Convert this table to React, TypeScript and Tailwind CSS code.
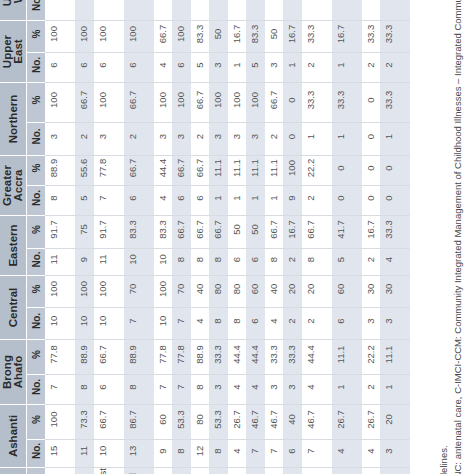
const colW = [
  "w-[80px]",
  "w-[28px]", "w-[35px]",
  "w-[30px]", "w-[35px]",
  "w-[32px]", "w-[32px]",
  "w-[27px]", "w-[33px]",
  "w-[30px]", "w-[30px]",
  "w-[33px]", "w-[40px]",
  "w-[30px]", "w-[32px]",
  "w-[30px]", "w-[32px]",
];

const regions = [
  { name: ["Ashanti"], w: "w-[63px]" },
  { name: ["Brong", "Ahafo"], w: "w-[65px]" },
  { name: ["Central"], w: "w-[64px]" },
  { name: ["Eastern"], w: "w-[60px]" },
  { name: ["Greater", "Accra"], w: "w-[60px]" },
  { name: ["Northern"], w: "w-[73px]" },
  { name: ["Upper", "East"], w: "w-[62px]" },
  { name: ["Upper", "West"], w: "w-[62px]" },
];

// label, two-line row?, values per region (No., %)
const rows: [string, boolean, string[]][] = [
  ["Trained in C-IMCI-CCM", true, ["15", "100", "7", "77.8", "10", "100", "11", "91.7", "8", "88.9", "3", "100", "6", "100"]],
  ["Has drug kit", false, ["11", "73.3", "8", "88.9", "10", "100", "9", "75", "5", "55.6", "2", "66.7", "6", "100"]],
  ["Supervised in last 3 months", true, ["10", "66.7", "6", "66.7", "10", "100", "11", "91.7", "7", "77.8", "3", "100", "6", "100"]],
  ["Has register and job aids", true, ["13", "86.7", "8", "88.9", "7", "70", "10", "83.3", "6", "66.7", "2", "66.7", "6", "100"]],
  ["RDTs in kit", false, ["9", "60", "7", "77.8", "10", "100", "10", "83.3", "4", "44.4", "3", "100", "4", "66.7"]],
  ["ACTs in kit", false, ["8", "53.3", "7", "77.8", "7", "70", "8", "66.7", "6", "66.7", "3", "100", "6", "100"]],
  ["ORS in kit", false, ["12", "80", "8", "88.9", "4", "40", "8", "66.7", "6", "66.7", "2", "66.7", "5", "83.3"]],
  ["Zinc in kit", false, ["8", "53.3", "3", "33.3", "8", "80", "8", "66.7", "1", "11.1", "3", "100", "3", "50"]],
  ["Amoxicillin", false, ["4", "26.7", "4", "44.4", "8", "80", "6", "50", "1", "11.1", "3", "100", "1", "16.7"]],
  ["Timer in kit", false, ["7", "46.7", "4", "44.4", "6", "60", "6", "50", "1", "11.1", "3", "100", "5", "83.3"]],
  ["MUAC tape", false, ["7", "46.7", "3", "33.3", "4", "40", "8", "66.7", "1", "11.1", "2", "66.7", "3", "50"]],
  ["Referral forms", false, ["6", "40", "3", "33.3", "2", "20", "2", "16.7", "9", "100", "0", "0", "1", "16.7"]],
  ["Treated a child last month", true, ["7", "46.7", "4", "44.4", "2", "20", "8", "66.7", "2", "22.2", "1", "33.3", "2", "33.3"]],
  ["Referred a child last month", true, ["4", "26.7", "1", "11.1", "6", "60", "5", "41.7", "0", "0", "1", "33.3", "1", "16.7"]],
  ["Home visits", false, ["4", "26.7", "2", "22.2", "3", "30", "2", "16.7", "0", "0", "0", "0", "2", "33.3"]],
  ["Counselled on ANC visits", true, ["3", "20", "1", "11.1", "3", "30", "4", "33.3", "0", "0", "1", "33.3", "2", "33.3"]],
];

function Header() {
  return (
    <div className="font-bold text-[#2b2b2b]">
      <div className="flex h-[27px]">
        <div className={`${colW[0]} shrink-0 bg-[#b5bfcc] border-r border-b border-white`} />
        {regions.map((r) => (
          <div
            key={r.name.join(" ")}
            className={`${r.w} shrink-0 bg-[#b5bfcc] border-r border-b border-white flex flex-col items-center justify-center text-[11.5px] leading-[11px]`}
          >
            {r.name.map((n) => (
              <span key={n}>{n}</span>
            ))}
          </div>
        ))}
      </div>
      <div className="flex h-[18px]">
        <div className={`${colW[0]} shrink-0 bg-[#bec7d3] border-r border-white`} />
        {colW.slice(1).map((w, i) => (
          <div
            key={i}
            className={`${w} shrink-0 bg-[#bec7d3] border-r border-white flex items-center justify-center pl-[5px] text-[10px]`}
          >
            {i % 2 === 0 ? "No." : "%"}
          </div>
        ))}
      </div>
    </div>
  );
}

function DataRow({ label, tall, vals, shaded }: { label: string; tall: boolean; vals: string[]; shaded: boolean }) {
  const cells = [...vals, "", ""];
  return (
    <div className={`flex ${tall ? "h-[30px]" : "h-[18.5px]"} ${shaded ? "bg-[#e1e6ee]" : "bg-white"}`}>
      <div className={`${colW[0]} shrink-0 overflow-hidden pl-1 pt-[3px] text-[9.5px] leading-[11.5px] text-[#444] border-r border-[#d8dce2]`}>
        {label}
      </div>
      {cells.map((v, i) => (
        <div
          key={i}
          className={`${colW[i + 1]} shrink-0 pt-[3px] pl-[5px] text-center text-[9.5px] leading-[11.5px] text-[#555] border-r border-[#d8dce2]`}
        >
          {v}
        </div>
      ))}
    </div>
  );
}

export default function App() {
  return (
    <div className="w-[474px] h-[474px] overflow-hidden bg-white [font-family:'Liberation_Sans',Arial,sans-serif]">
      <div className="w-[474px] h-[474px] overflow-hidden -rotate-90">
        <div className="ml-[-73px] w-max">
          <Header />
          {rows.map(([label, tall, vals], i) => (
            <DataRow key={label} label={label} tall={tall} vals={vals} shaded={i % 2 === 1} />
          ))}
        </div>
        <div className="ml-[-73px] mt-[27px] w-[700px] text-[9.5px] leading-[14px] text-[#4a4a4a] whitespace-nowrap">
          <p>
            <sup className="text-[6px]">a</sup>As per MoH guidelines.
          </p>
          <p>
            Abbreviations: ANC: antenatal care, C-IMCI-CCM: Community Integrated Management of Childhood Illnesses – Integrated Community Case Management.
          </p>
        </div>
      </div>
    </div>
  );
}
